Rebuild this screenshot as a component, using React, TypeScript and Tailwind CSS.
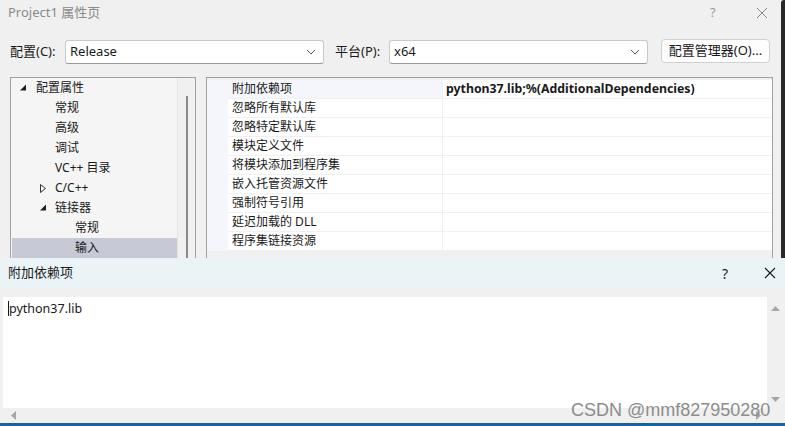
import React from 'react';

const uiFont = { fontFamily: '"Noto Sans", "Noto Sans CJK SC", sans-serif' };

const treeItems = [
  { label: '配置属性', indent: 36, arrow: 'open' as const, arrowX: 20 },
  { label: '常规', indent: 55 },
  { label: '高级', indent: 55 },
  { label: '调试', indent: 55 },
  { label: 'VC++ 目录', indent: 55 },
  { label: 'C/C++', indent: 55, arrow: 'closed' as const, arrowX: 40 },
  { label: '链接器', indent: 55, arrow: 'open' as const, arrowX: 40 },
  { label: '常规', indent: 75 },
  { label: '输入', indent: 75, selected: true },
];

const gridRows = [
  '附加依赖项',
  '忽略所有默认库',
  '忽略特定默认库',
  '模块定义文件',
  '将模块添加到程序集',
  '嵌入托管资源文件',
  '强制符号引用',
  '延迟加载的 DLL',
  '程序集链接资源',
];

const Chevron = () => (
  <svg width="10" height="6" viewBox="0 0 10 6" className="shrink-0">
    <path d="M1 1l4 4 4-4" fill="none" stroke="#555" strokeWidth="1" />
  </svg>
);

const TreeArrow = ({ kind }: { kind: 'open' | 'closed' }) =>
  kind === 'open' ? (
    <svg width="7" height="7" viewBox="0 0 7 7">
      <path d="M6 0.5V6.5H0z" fill="#1e1e1e" />
    </svg>
  ) : (
    <svg width="6" height="9" viewBox="0 0 6 9">
      <path d="M0.5 0.5L5.5 4.5L0.5 8.5z" fill="none" stroke="#333" strokeWidth="1" />
    </svg>
  );

const Select = ({ value, width }: { value: string; width: string }) => (
  <div
    className={`${width} h-[24px] bg-white border border-[#c9c9c9] border-b-[#9a9a9a] rounded-[3px] flex items-center justify-between pl-[4px] pr-[7px] text-[13px] text-[#1a1a1a]`}
  >
    <span>{value}</span>
    <Chevron />
  </div>
);

export default function App() {
  return (
    <div className="w-[785px] h-[426px] overflow-hidden bg-[#f0f0f0] flex flex-col" style={uiFont}>
      {/* property page window */}
      <div className="h-[258px] flex shrink-0">
        <div className="flex-1 flex flex-col">
          <div className="h-[26px] flex items-center pl-[8px] text-[13px] text-[#8a8a8a]">
            <span className="flex-1">Project1 属性页</span>
            <span className="w-[46px] text-[#9a9a9a]">?</span>
            <svg width="12" height="12" viewBox="0 0 12 12" className="mr-[13px]">
              <path d="M1 1l10 10M11 1L1 11" stroke="#8a8a8a" strokeWidth="1" />
            </svg>
          </div>

          <div className="mt-[14px] h-[24px] flex items-center text-[13px] text-[#1a1a1a]">
            <span className="w-[65px] pl-[10px]">配置(C):</span>
            <Select value="Release" width="w-[259px]" />
            <span className="w-[65px] pl-[11px]">平台(P):</span>
            <Select value="x64" width="w-[259px]" />
            <button className="ml-[13px] mt-[-2px] w-[109px] h-[24px] bg-[#fdfdfd] border border-[#d0d0d0] rounded-[4px] text-[13px] text-[#1a1a1a]">
              配置管理器(O)...
            </button>
          </div>

          <div className="mt-[13px] flex flex-1 min-h-0 pl-[10px]">
            {/* tree */}
            <div className="w-[186px] border border-b-0 border-[#a0a0a0] flex bg-[#f0f0f0]">
              <div className="w-[166px] bg-[#f5f5f5] flex flex-col text-[12px] text-[#1a1a1a]">
                {treeItems.map((item, i) => (
                  <div
                    key={i}
                    className={`h-[20px] shrink-0 relative flex items-center ${item.selected ? 'bg-[#c8c9d6] ml-[1px]' : ''}`}
                  >
                    {item.arrow && (
                      <span className="absolute top-[6px] flex" style={{ left: item.arrowX - 11 }}>
                        <TreeArrow kind={item.arrow} />
                      </span>
                    )}
                    <span style={{ paddingLeft: item.indent - 11 - (item.selected ? 1 : 0) }}>{item.label}</span>
                  </div>
                ))}
              </div>
              <div className="flex-1 border-l border-[#e4e4e4] flex justify-center pt-[18px]">
                <div className="w-[2px] h-full bg-[#8a8a8a]" />
              </div>
            </div>

            {/* property grid */}
            <div className="ml-[10px] w-[567px] border border-b-0 border-[#a0a0a0] bg-[#f0f0f0] flex flex-col pt-[2px]">
              {gridRows.map((name, i) => (
                <div key={i} className="h-[19px] shrink-0 flex text-[12px] text-[#1a1a1a]">
                  <div className="w-[21px] bg-[#f4f6fb]" />
                  <div
                    className={`w-[214px] pl-[4px] flex items-center border-b border-[#f0f0f0] ${i === 0 ? 'bg-[#f4f6fb]' : 'bg-white'}`}
                  >
                    {name}
                  </div>
                  <div className="flex-1 pl-[3px] flex items-center bg-white border-b border-l border-[#f0f0f0] font-bold text-[12.3px]">
                    {i === 0 ? 'python37.lib;%(AdditionalDependencies)' : ''}
                  </div>
                </div>
              ))}
              <div className="flex-1 bg-[#f0f0f0]" />
            </div>
          </div>
        </div>
        <div className="w-[4px] bg-[#2a2a2a] rounded-tl-[3px]" />
      </div>

      {/* edit dialog on top */}
      <div className="h-[168px] flex flex-col bg-[#f0f0f0] rounded-tl-[8px] overflow-hidden">
        <div className="h-[30px] bg-[#eaf4f6] flex items-center pl-[8px] text-[13px] text-[#1a1a1a]">
          <span className="flex-1">附加依赖项</span>
          <span className="w-[42px] text-[14px]">?</span>
          <svg width="12" height="12" viewBox="0 0 12 12" className="mr-[9px]">
            <path d="M1 1l10 10M11 1L1 11" stroke="#1a1a1a" strokeWidth="1.1" />
          </svg>
        </div>
        <div className="h-[9px]" />
        <div className="flex-1 flex flex-col pl-[3px] pr-[2px]">
          <div className="flex-1 flex min-h-0">
            <div className="flex-1 bg-white pl-[5px] pt-[3px] text-[12.5px] text-[#1a1a1a]">
              <span className="inline-block w-[1px] h-[15px] bg-[#1a1a1a] align-[-3px]" />
              <span>python37.lib</span>
            </div>
            <div className="w-[16px] bg-[#f0f0f0] flex flex-col items-center justify-between pt-[9px] pb-[6px]">
              <svg width="9" height="5" viewBox="0 0 9 5">
                <path d="M0 5L4.5 0L9 5z" fill="#a6a6a6" />
              </svg>
              <svg width="9" height="5" viewBox="0 0 9 5">
                <path d="M0 0L4.5 5L9 0z" fill="#a6a6a6" />
              </svg>
            </div>
          </div>
          <div className="h-[15px] flex items-center justify-between pl-[8px] pr-[22px]">
            <svg width="5" height="9" viewBox="0 0 5 9">
              <path d="M5 0L0 4.5L5 9z" fill="#a6a6a6" />
            </svg>
            <svg width="5" height="9" viewBox="0 0 5 9">
              <path d="M0 0L5 4.5L0 9z" fill="#a6a6a6" />
            </svg>
          </div>
        </div>
        <div className="h-[3px] bg-[#0f63b6]" />
      </div>

      {/* watermark */}
      <div
        className="absolute left-[571px] top-[401px] text-[18px] text-[#8c8c8c] leading-none"
        style={{ fontFamily: '"Liberation Sans", Arial, sans-serif' }}
      >
        CSDN @mmf827950280
      </div>
    </div>
  );
}
